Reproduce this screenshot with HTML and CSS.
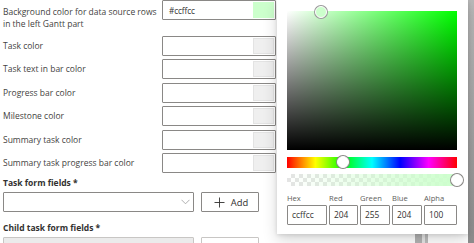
FILE: index.html
```html
<!DOCTYPE html>
<html>
<head>
    <title>Gantt settings</title>
    <link rel="stylesheet" href="styles.css">
</head>
<body>
    <div class="page">
        <div class="panel">
            <div class="form">
                <div class="row row-tall">
                    <label class="label">Background color for data source rows in the left Gantt part</label>
                    <div class="color-field">
                        <span class="value">#ccffcc</span>
                        <span class="swatch swatch-set"></span>
                    </div>
                </div>
                <div class="row">
                    <label class="label">Task color</label>
                    <div class="color-field"><span class="value"></span><span class="swatch"></span></div>
                </div>
                <div class="row">
                    <label class="label">Task text in bar color</label>
                    <div class="color-field"><span class="value"></span><span class="swatch"></span></div>
                </div>
                <div class="row">
                    <label class="label">Progress bar color</label>
                    <div class="color-field"><span class="value"></span><span class="swatch"></span></div>
                </div>
                <div class="row">
                    <label class="label">Milestone color</label>
                    <div class="color-field"><span class="value"></span><span class="swatch"></span></div>
                </div>
                <div class="row">
                    <label class="label">Summary task color</label>
                    <div class="color-field"><span class="value"></span><span class="swatch"></span></div>
                </div>
                <div class="row">
                    <label class="label">Summary task progress bar color</label>
                    <div class="color-field"><span class="value"></span><span class="swatch"></span></div>
                </div>

                <div class="section-label">Task form fields <span class="req">*</span></div>
                <div class="picker-row">
                    <div class="dropdown">
                        <svg class="chevron" width="9" height="6" viewBox="0 0 9 6"><path d="M0.5 0.8 L4.5 4.8 L8.5 0.8" fill="none" stroke="#a6a6a6" stroke-width="0.9"/></svg>
                    </div>
                    <button type="button" class="add-btn">
                        <svg width="11" height="11" viewBox="0 0 11 11"><path d="M5.5 0.5 V10.5 M0.5 5.5 H10.5" stroke="#323130" stroke-width="0.9"/></svg>
                        <span>Add</span>
                    </button>
                </div>

                <div class="section-label">Child task form fields <span class="req">*</span></div>
                <div class="picker-row picker-disabled">
                    <div class="dropdown"></div>
                    <button type="button" class="add-btn"></button>
                </div>
            </div>
            <div class="scrollbar">
                <span class="scroll-thumb"></span>
                <span class="scroll-gap"></span>
                <span class="scroll-thumb scroll-thin"></span>
            </div>
        </div>
        <div class="backdrop"></div>

        <div class="color-popup">
            <div class="sv-area">
                <span class="thumb sv-thumb" style="left: 34px; top: 1px;"></span>
            </div>
            <div class="hue-bar">
                <span class="thumb" style="left: 56.7px;"></span>
            </div>
            <div class="alpha-bar">
                <span class="thumb" style="left: 170px;"></span>
            </div>
            <div class="inputs">
                <div class="input-col">
                    <span class="input-label">Hex</span>
                    <div class="input-box">ccffcc</div>
                </div>
                <div class="input-col">
                    <span class="input-label">Red</span>
                    <div class="input-box">204</div>
                </div>
                <div class="input-col">
                    <span class="input-label">Green</span>
                    <div class="input-box">255</div>
                </div>
                <div class="input-col">
                    <span class="input-label">Blue</span>
                    <div class="input-box">204</div>
                </div>
                <div class="input-col">
                    <span class="input-label">Alpha</span>
                    <div class="input-box">100</div>
                </div>
            </div>
        </div>
    </div>
</body>
</html>
```

FILE: styles.css
```css
body {
    margin: 0;
    font-family: "Open Sans", "Noto Sans", sans-serif;
    color: #323130;
    background: #ffffff;
}

.page {
    position: relative;
    display: flex;
    width: 474px;
    height: 243px;
    overflow: hidden;
}

.panel {
    display: flex;
    width: 468px;
    background: #ffffff;
}

.form {
    width: 276px;
    padding-left: 3px;
}

.row {
    display: flex;
    height: 20px;
    margin-bottom: 3.4px;
    align-items: center;
}

.row-tall {
    height: 30px;
    margin-bottom: 6px;
    align-items: flex-start;
}

.label {
    width: 159px;
    font-size: 8.5px;
    line-height: 12px;
    color: #444342;
}

.row-tall .label {
    padding-top: 6px;
}

.color-field {
    display: flex;
    align-items: center;
    box-sizing: border-box;
    width: 114px;
    height: 20px;
    border: 1px solid #8a8886;
    border-radius: 1px;
    background: #ffffff;
}

.value {
    flex: 1;
    padding-left: 6px;
    font-size: 8.2px;
    letter-spacing: -0.1px;
    color: #323130;
}

.swatch {
    width: 21px;
    height: 16px;
    margin-right: 1px;
    background: #efefef;
    box-shadow: inset 0 0 0 1px #e3e3e3;
}

.swatch-set {
    background: #ccffcc;
    box-shadow: none;
}

.section-label {
    margin-top: 3px;
    margin-bottom: 2px;
    font-size: 8.5px;
    line-height: 14px;
    font-weight: 700;
    color: #323130;
}

.picker-row {
    display: flex;
    gap: 7px;
    margin-bottom: 9px;
}

.dropdown {
    display: flex;
    align-items: center;
    justify-content: flex-end;
    box-sizing: border-box;
    width: 191px;
    height: 20px;
    padding-right: 3px;
    border: 1px solid #8a8886;
    border-radius: 1px;
}

.add-btn {
    display: flex;
    align-items: center;
    justify-content: center;
    gap: 6px;
    box-sizing: border-box;
    width: 58px;
    height: 20px;
    padding: 0 0 0 2px;
    border: 1px solid #8a8886;
    border-radius: 1px;
    background: #ffffff;
    font-family: inherit;
    font-size: 9.4px;
    color: #323130;
}

.picker-disabled .dropdown {
    background: #ebebeb;
    border-color: #c8c6c4;
}

.picker-disabled .add-btn {
    border-color: #c8c6c4;
}

.scrollbar {
    display: flex;
    align-items: flex-end;
    margin-left: 136px;
    height: 243px;
}

.scroll-thumb {
    width: 7px;
    height: 9px;
    background: #b3b3b3;
}

.scroll-gap {
    width: 3px;
    height: 9px;
    background: #e6e6e6;
}

.scroll-thin {
    width: 3px;
    background: #bdbdbd;
}

.backdrop {
    flex: 1;
    background: linear-gradient(#b9b9b9, #8e8e8e);
}

/* colour picker callout */
.color-popup {
    position: absolute;
    left: 277px;
    top: 0;
    box-sizing: border-box;
    width: 191px;
    height: 234px;
    padding: 11px 11px 9px 10px;
    background: #ffffff;
    box-shadow: 0 6px 14px rgba(0, 0, 0, 0.16), 0 1px 4px rgba(0, 0, 0, 0.12);
}

.sv-area {
    position: relative;
    height: 139px;
    background:
        linear-gradient(to top, #000000, rgba(0, 0, 0, 0)),
        linear-gradient(to right, #ffffff, rgba(255, 255, 255, 0)),
        #00ff00;
}

.thumb {
    position: absolute;
    top: 50%;
    width: 10px;
    height: 10px;
    margin: -6.5px 0 0 -6.5px;
    border: 1.5px solid #ffffff;
    border-radius: 50%;
    background: #ffffff;
    box-shadow: 0 0 0 1px #8a8886;
}

.sv-thumb {
    background: #ccffcc;
    box-shadow: 0 0 0 1px #9a9a9a;
}

.hue-bar {
    position: relative;
    height: 11px;
    margin-top: 7px;
    background: linear-gradient(to right, #ff0000, #ffff00 16.7%, #00ff00 33.3%, #00ffff 50%, #0000ff 66.7%, #ff00ff 83.3%, #ff0000);
}

.alpha-bar {
    position: relative;
    height: 12px;
    margin-top: 6px;
    background:
        linear-gradient(to right, rgba(204, 255, 204, 0), #ccffcc),
        repeating-conic-gradient(#e4e4e4 0% 25%, #ffffff 0% 50%) 0 0 / 8px 8px;
}

.inputs {
    display: grid;
    grid-template-columns: 40px 29px 30px 30px 1fr;
    gap: 2px;
    margin-top: 7px;
}

.input-col {
    display: flex;
    flex-direction: column;
}

.input-label {
    font-size: 7.6px;
    line-height: 10px;
    margin-bottom: 2px;
    color: #605e5c;
}

.input-box {
    box-sizing: border-box;
    height: 20px;
    padding-left: 4px;
    border: 1px solid #8a8886;
    border-radius: 1px;
    font-size: 8.4px;
    line-height: 18px;
    color: #323130;
}
```
